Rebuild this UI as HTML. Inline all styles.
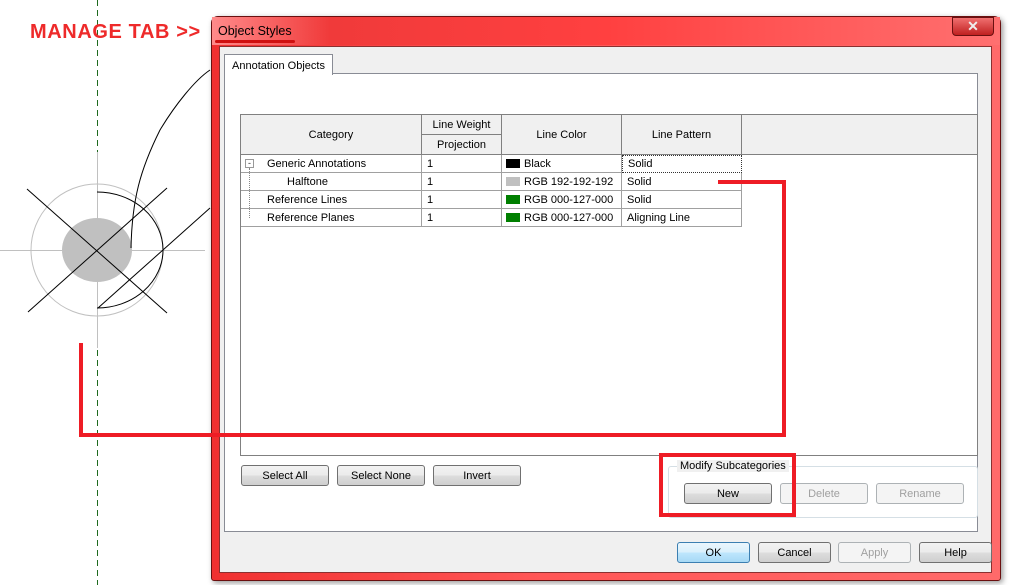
<!DOCTYPE html>
<html><head><style>
*{box-sizing:border-box;margin:0;padding:0}
body{width:1013px;height:585px;position:relative;background:#fff;font-family:"Liberation Sans",sans-serif;font-size:11px;color:#000;overflow:hidden}
.a{position:absolute}
.btn{position:absolute;height:21px;border:1px solid #707070;border-radius:3px;background:linear-gradient(#f2f2f2,#ebebeb 50%,#dddddd 51%,#cfcfcf);text-align:center;line-height:21px;font-size:11px}
.dis{border-color:#adb2b5;background:#f4f4f4;color:#a0a0a0}
.cell{position:absolute;border-right:1px solid #a0a0a0;border-bottom:1px solid #a0a0a0;height:18px;line-height:19px;padding-left:5px;font-size:11px;background:#fff}
.hd{position:absolute;background:#f0f0f0;border-right:1px solid #808080;border-bottom:1px solid #808080;text-align:center;font-size:11px}
.sw{display:inline-block;width:14px;height:9px;margin-right:4px;vertical-align:-1px}
</style></head><body>
<svg class="a" style="left:0;top:0" width="220" height="585">
<line x1="97.5" y1="0" x2="97.5" y2="585" stroke="#1d6a1d" stroke-dasharray="6,4"/>
<line x1="0" y1="250.5" x2="205" y2="250.5" stroke="#c0c0c0"/>
<line x1="97.5" y1="152" x2="97.5" y2="348" stroke="#c0c0c0"/>
<circle cx="97" cy="250" r="66" fill="none" stroke="#c0c0c0"/>
<path d="M97 192 A66 58 0 0 1 97 308" fill="none" stroke="#000"/>
<ellipse cx="97" cy="250" rx="35" ry="32" fill="#c0c0c0"/>
<line x1="27" y1="189" x2="167" y2="313" stroke="#000"/>
<line x1="28" y1="312" x2="167" y2="188" stroke="#000"/>
<line x1="98" y1="308" x2="210" y2="208" stroke="#000"/>
<path d="M131 248 C132 200 140 170 160 130 C175 105 195 80 210 70" fill="none" stroke="#000"/>
</svg>
<div class="a" style="left:30px;top:21px;color:#ee2a2a;font-weight:bold;font-size:20px;letter-spacing:0.6px">MANAGE TAB &gt;&gt;</div>
<div class="a" style="left:211px;top:16px;width:790px;height:565px;border-radius:7px 7px 3px 3px;background:linear-gradient(90deg,#f03030,#ff5555 40%,#ff6a6a);border:1px solid #6a1010;box-shadow:2px 2px 6px rgba(0,0,0,.4)"></div>
<div class="a" style="left:212px;top:17px;width:788px;height:28px;background:linear-gradient(90deg,#ff8a8a,#f03a3a 15%,#ff4040 50%,#ff7070)"></div>
<div class="a" style="left:218px;top:24px;font-size:12.5px">Object Styles</div>
<div class="a" style="left:215px;top:40px;width:80px;height:3px;background:#d01010;border-radius:2px"></div>
<div class="a" style="left:952px;top:17px;width:42px;height:19px;border:1px solid #6a1010;border-radius:0 0 4px 4px;background:linear-gradient(#f07070,#c02020);color:#eee;text-align:center;font-weight:bold;font-size:14px;line-height:17px">✕</div>
<div class="a" style="left:219px;top:46px;width:773px;height:527px;background:#f0f0f0;border:1px solid #8a3030"></div>
<div class="a" style="left:224px;top:73px;width:754px;height:459px;background:#fff;border:1px solid #898c95"></div>
<div class="a" style="left:224px;top:54px;width:109px;height:21px;background:#fff;border:1px solid #898c95;border-bottom:none;font-size:11px;padding:5px 0 0 7px">Annotation Objects</div>
<div class="a" style="left:240px;top:114px;width:738px;height:342px;border:1px solid #808080;background:#fff"></div>
<div class="a" style="left:241px;top:115px;width:736px;height:40px;background:#f0f0f0;border-bottom:1px solid #808080"></div>
<div class="hd" style="left:241px;top:115px;width:181px;height:40px;line-height:40px">Category</div>
<div class="hd" style="left:422px;top:115px;width:80px;height:20px;line-height:20px">Line Weight</div>
<div class="hd" style="left:422px;top:135px;width:80px;height:20px;line-height:20px">Projection</div>
<div class="hd" style="left:502px;top:115px;width:120px;height:40px;line-height:40px">Line Color</div>
<div class="hd" style="left:622px;top:115px;width:120px;height:40px;line-height:40px">Line Pattern</div>
<div class="cell" style="left:241px;top:155px;width:181px;padding-left:26px">Generic Annotations</div>
<div class="cell" style="left:241px;top:173px;width:181px;padding-left:46px">Halftone</div>
<div class="cell" style="left:241px;top:191px;width:181px;padding-left:26px">Reference Lines</div>
<div class="cell" style="left:241px;top:209px;width:181px;padding-left:26px">Reference Planes</div>
<div class="a" style="left:245px;top:159px;width:9px;height:9px;border:1px solid #999;font-size:9px;line-height:6px;text-align:center;color:#333">-</div>
<div class="a" style="left:249px;top:168px;height:50px;border-left:1px dotted #888"></div>
<div class="cell" style="left:422px;top:155px;width:80px">1</div>
<div class="cell" style="left:422px;top:173px;width:80px">1</div>
<div class="cell" style="left:422px;top:191px;width:80px">1</div>
<div class="cell" style="left:422px;top:209px;width:80px">1</div>
<div class="cell" style="left:502px;top:155px;width:120px;padding-left:4px"><span class="sw" style="background:#000"></span>Black</div>
<div class="cell" style="left:502px;top:173px;width:120px;padding-left:4px"><span class="sw" style="background:#c0c0c0"></span>RGB 192-192-192</div>
<div class="cell" style="left:502px;top:191px;width:120px;padding-left:4px"><span class="sw" style="background:#007f00"></span>RGB 000-127-000</div>
<div class="cell" style="left:502px;top:209px;width:120px;padding-left:4px"><span class="sw" style="background:#007f00"></span>RGB 000-127-000</div>
<div class="cell" style="left:622px;top:155px;width:120px;border:1px dotted #333;line-height:17px">Solid</div>
<div class="cell" style="left:622px;top:173px;width:120px">Solid</div>
<div class="cell" style="left:622px;top:191px;width:120px">Solid</div>
<div class="cell" style="left:622px;top:209px;width:120px">Aligning Line</div>
<div class="btn" style="left:241px;top:465px;width:88px">Select All</div>
<div class="btn" style="left:337px;top:465px;width:88px">Select None</div>
<div class="btn" style="left:433px;top:465px;width:88px">Invert</div>
<div class="a" style="left:668px;top:466px;width:310px;height:52px;border:1px solid #d5dfe5;border-radius:3px"></div>
<div class="a" style="left:677px;top:460px;background:#f0f0f0;padding:0 3px;font-size:11px">Modify Subcategories</div>
<div class="btn" style="left:684px;top:483px;width:88px">New</div>
<div class="btn dis" style="left:780px;top:483px;width:88px">Delete</div>
<div class="btn dis" style="left:876px;top:483px;width:88px">Rename</div>
<div class="btn" style="left:677px;top:542px;width:73px;border-color:#3c7fb1;background:linear-gradient(#eaf6fd,#d9f0fc 50%,#bee6fd 51%,#a7d9f5)">OK</div>
<div class="btn" style="left:758px;top:542px;width:73px">Cancel</div>
<div class="btn dis" style="left:838px;top:542px;width:73px">Apply</div>
<div class="btn" style="left:919px;top:542px;width:73px">Help</div>
<svg class="a" style="left:0;top:0" width="1013" height="585">
<path d="M718 182 H784 V435 H81 V343" fill="none" stroke="#ee1c25" stroke-width="4"/>
<rect x="661" y="455" width="133" height="60" fill="none" stroke="#ee1c25" stroke-width="4"/>
</svg>
</body></html>
